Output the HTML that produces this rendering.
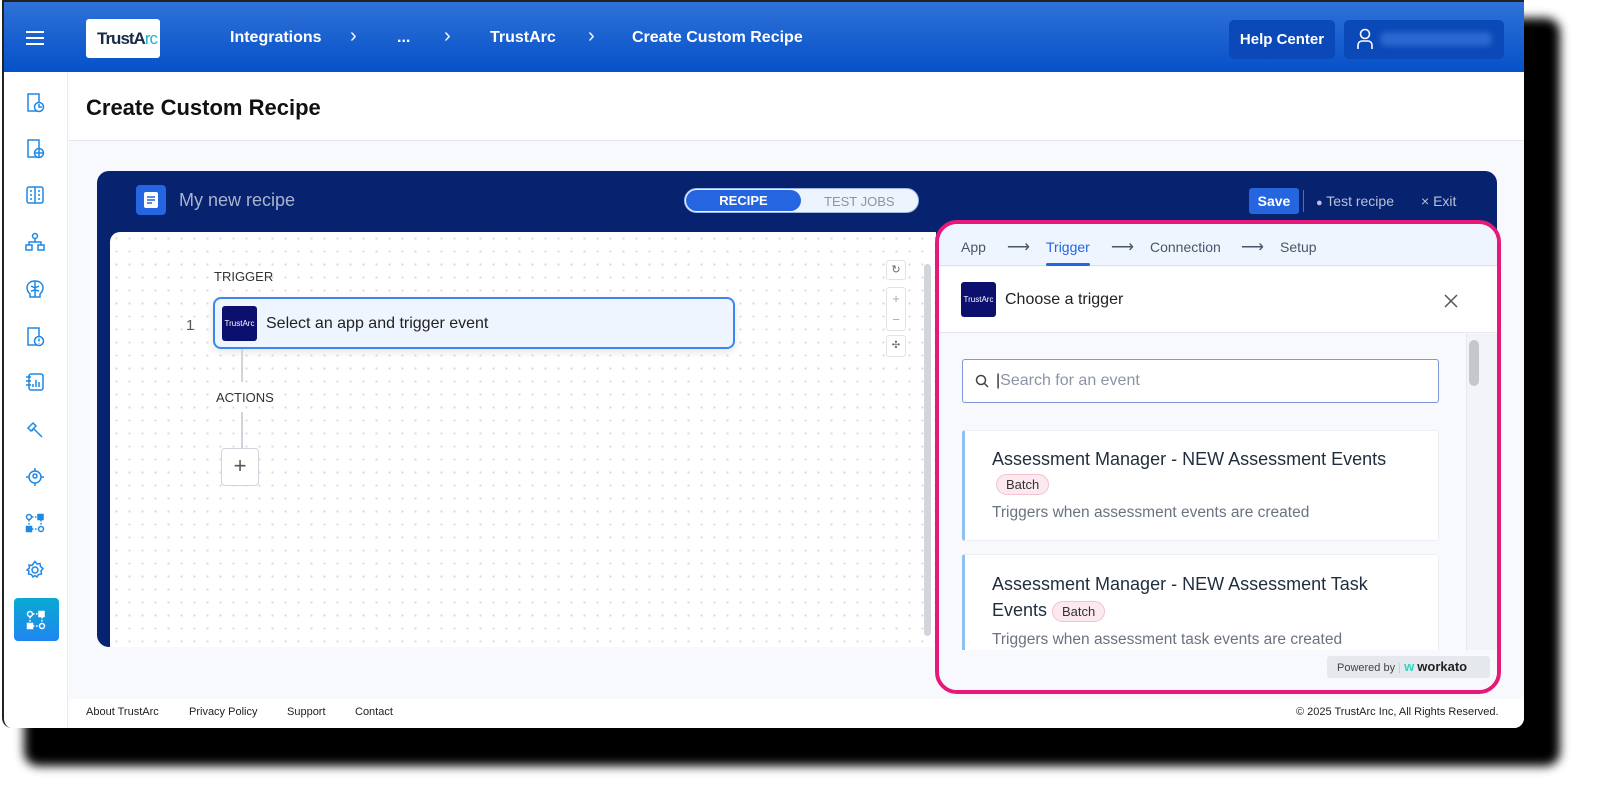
<!DOCTYPE html>
<html><head><meta charset="utf-8"><style>
*{box-sizing:border-box;margin:0;padding:0}
body{width:1600px;height:788px;position:relative;overflow:hidden;background:#fff;font-family:"Liberation Sans",sans-serif;}
.a{position:absolute}
.shadow{position:absolute;left:24px;top:18px;width:1536px;height:748px;background:#000;border-radius:14px;filter:blur(5px)}
.win{position:absolute;left:2px;top:0;width:1522px;height:728px;background:#f7f9fc;border-radius:0 0 10px 10px;overflow:hidden;border-left:2px solid #222;border-top:2px solid #222}
.hdr{left:0;top:0;width:1522px;height:70px;background:linear-gradient(#2f72d8,#0651c9)}
.hdr .t{color:#fff;font-size:16px;font-weight:bold;top:27px}
.hdr .c{color:#fff;font-size:20px;top:23px}
.side{left:0;top:70px;width:64px;height:658px;background:#fff;border-right:1px solid #e8ecf3}
.side svg{position:absolute;left:21px}
.dots{background-color:#fff;background-image:radial-gradient(#d6dae2 1px,transparent 1.2px);background-size:13px 13px}
.gr{color:#4a5568}
</style></head><body>
<div class="shadow"></div>
<div class="win">
 <div class="a hdr">
  <div class="a" style="left:22px;top:29px;width:18px;height:2px;background:#fff;box-shadow:0 6px 0 #fff,0 12px 0 #fff"></div>
  <div class="a" style="left:82px;top:17px;width:74px;height:39px;background:#fff;border-radius:3px;font-size:17px;font-weight:bold;color:#1a2b4a;padding:10px 0 0 11px;letter-spacing:-1px;white-space:nowrap">TrustA<span style="color:#1ab3c8;font-weight:normal">rc</span></div>
  <div class="a t" style="left:226px">Integrations</div>
  <div class="a c" style="left:346px">›</div>
  <div class="a t" style="left:393px">...</div>
  <div class="a c" style="left:440px">›</div>
  <div class="a t" style="left:486px">TrustArc</div>
  <div class="a c" style="left:584px">›</div>
  <div class="a t" style="left:628px">Create Custom Recipe</div>
  <div class="a" style="left:1225px;top:18px;width:106px;height:39px;background:#0b48b8;border-radius:5px;color:#fff;font-weight:bold;font-size:15px;text-align:center;line-height:39px">Help Center</div>
  <div class="a" style="left:1340px;top:18px;width:160px;height:39px;background:#0b48b8;border-radius:5px">
   <svg class="a" style="left:11px;top:8px" width="20" height="22" viewBox="0 0 20 22" fill="none" stroke="#fff" stroke-width="1.6"><circle cx="10" cy="6" r="4.5"/><path d="M3 21v-4a4 4 0 0 1 4-4h6a4 4 0 0 1 4 4v4"/></svg>
   <div class="a" style="left:36px;top:12px;width:112px;height:14px;background:#2c68d0;border-radius:6px;filter:blur(3px)"></div>
  </div>
 </div>
 <div class="a side">
  <svg style="top:20px" width="20" height="22" viewBox="0 0 20 22" fill="none" stroke="#1e88e5" stroke-width="1.5"><path d="M12 19H3V2h11v8"/><circle cx="14" cy="15" r="4.5"/><path d="M14 12v3h3"/></svg>
  <svg style="top:66px" width="20" height="22" viewBox="0 0 20 22" fill="none" stroke="#1e88e5" stroke-width="1.5"><path d="M12 19H3V2h11v8"/><circle cx="14" cy="15" r="4.5"/><path d="M9.5 15h9M14 10.5v9"/></svg>
  <svg style="top:113px" width="20" height="20" viewBox="0 0 20 20" fill="none" stroke="#1e88e5" stroke-width="1.5"><rect x="2" y="2" width="16" height="16" rx="2"/><path d="M10 2v16M5 6h2M5 10h2M5 14h2M13 6h2M13 10h2M13 14h2"/></svg>
  <svg style="top:160px" width="20" height="20" viewBox="0 0 20 20" fill="none" stroke="#1e88e5" stroke-width="1.5"><circle cx="10" cy="4" r="2.5"/><rect x="1" y="13" width="6" height="5"/><rect x="13" y="13" width="6" height="5"/><path d="M10 6.5v3M4 13v-3h12v3"/></svg>
  <svg style="top:207px" width="20" height="20" viewBox="0 0 20 20" fill="none" stroke="#1e88e5" stroke-width="1.5"><path d="M10 2C5 2 2 5 2 9c0 3 2 5 3 6v3h10v-3c1-1 3-3 3-6 0-4-3-7-8-7zM10 2v16M6 7l4 2M14 7l-4 2M6 12l4-1M14 12l-4-1"/></svg>
  <svg style="top:254px" width="20" height="22" viewBox="0 0 20 22" fill="none" stroke="#1e88e5" stroke-width="1.5"><path d="M12 19H3V2h11v8"/><circle cx="14" cy="15" r="4.5"/><path d="M14 12.5v3M14 17v.5"/></svg>
  <svg style="top:300px" width="20" height="20" viewBox="0 0 20 20" fill="none" stroke="#1e88e5" stroke-width="1.5"><rect x="4" y="2" width="14" height="16" rx="2"/><path d="M1 5h5M1 9h5M1 13h5M8 15v-3M11 15V8M14 15v-5"/></svg>
  <svg style="top:348px" width="20" height="20" viewBox="0 0 20 20" fill="none" stroke="#1e88e5" stroke-width="1.5"><path d="M3 8l5-5 3 3-5 5zM9 9l8 8M7 10l1 1"/></svg>
  <svg style="top:395px" width="20" height="20" viewBox="0 0 20 20" fill="none" stroke="#1e88e5" stroke-width="1.5"><circle cx="10" cy="10" r="6"/><path d="M10 1v3M10 16v3M1 10h3M16 10h3"/><circle cx="10" cy="9" r="2"/></svg>
  <svg style="top:441px" width="20" height="20" viewBox="0 0 20 20" fill="none" stroke="#1e88e5" stroke-width="1.5"><circle cx="4" cy="4" r="2.5"/><rect x="13" y="1.5" width="5" height="5" fill="#1e88e5"/><rect x="1.5" y="13.5" width="5" height="5" fill="#1e88e5"/><circle cx="16" cy="16" r="2.5"/><path d="M7 4h5M4 7v5M16 7v5M7 16h5" stroke-dasharray="1.5 1.5"/></svg>
  <svg style="top:488px" width="20" height="20" viewBox="0 0 20 20" fill="none" stroke="#1e88e5" stroke-width="1.5"><circle cx="10" cy="10" r="3"/><path d="M10 1.5l2 2.5 3-.5.5 3 2.5 2-2 2.5.5 3-3 .5-1.5 2.5-2-1.5-2 1.5-1.5-2.5-3-.5.5-3L2 10l2.5-2-.5-3 3 .5z"/></svg>
  <div class="a" style="left:10px;top:526px;width:45px;height:43px;border-radius:4px;background:linear-gradient(#0aa9d2,#1f86f0)">
   <svg class="a" style="left:12px;top:12px" width="20" height="20" viewBox="0 0 20 20" fill="none" stroke="#fff" stroke-width="1.5"><circle cx="4" cy="4" r="2.5"/><rect x="13" y="1.5" width="5" height="5" fill="#fff"/><rect x="1.5" y="13.5" width="5" height="5" fill="#fff"/><circle cx="16" cy="16" r="2.5"/><path d="M7 4h5M4 7v5M16 7v5M7 16h5" stroke-dasharray="1.5 1.5"/></svg>
  </div>
 </div>
 <div class="a" style="left:65px;top:70px;width:1457px;height:69px;background:#fff;border-bottom:1px solid #e6e9ef"></div>
 <div class="a" style="left:82px;top:93px;font-size:22px;font-weight:bold;color:#111">Create Custom Recipe</div>
 <div class="a" style="left:93px;top:169px;width:1400px;height:476px;background:#07226f;border-radius:12px"></div>
 <div class="a" style="left:132px;top:183px;width:30px;height:30px;background:#2566e0;border-radius:4px">
  <svg class="a" style="left:7px;top:6px" width="16" height="18" viewBox="0 0 16 18"><rect x="1" y="1" width="14" height="16" rx="2" fill="#fff"/><path d="M4 6h8M4 9h8M4 12h5" stroke="#2566e0" stroke-width="1.5"/></svg>
 </div>
 <div class="a" style="left:175px;top:188px;font-size:18px;color:#aab4cc">My new recipe</div>
 <div class="a" style="left:680px;top:186px;width:235px;height:25px;background:#eef4fd;border-radius:13px;border:1px solid #9cb6e5"></div>
 <div class="a" style="left:682px;top:188px;width:115px;height:21px;background:#2566e0;border-radius:11px;color:#fff;font-size:13px;font-weight:bold;text-align:center;line-height:21px">RECIPE</div>
 <div class="a" style="left:820px;top:192px;font-size:13px;color:#8a94a6">TEST JOBS</div>
 <div class="a" style="left:1245px;top:186px;width:50px;height:26px;background:#2566e0;border-radius:3px;color:#fff;font-size:14px;font-weight:bold;text-align:center;line-height:26px">Save</div>
 <div class="a" style="left:1299px;top:188px;width:1px;height:22px;background:#5a6ea0"></div>
 <div class="a" style="left:1312px;top:191px;font-size:14px;color:#b7c1d8"><span style="font-size:11px">●</span> Test recipe</div>
 <div class="a" style="left:1417px;top:191px;font-size:14px;color:#b7c1d8">× Exit</div>
 <div class="a dots" style="left:106px;top:230px;width:826px;height:415px;border-radius:10px 0 0 0"></div>
 <div class="a" style="left:210px;top:267px;font-size:13px;color:#333">TRIGGER</div>
 <div class="a" style="left:182px;top:315px;font-size:15px;color:#555">1</div>
 <div class="a" style="left:209px;top:295px;width:522px;height:52px;background:#eef5fe;border:2px solid #3b86f0;border-radius:8px;box-shadow:0 3px 8px rgba(0,0,0,.1)"></div>
 <div class="a" style="left:218px;top:304px;width:35px;height:35px;background:#0b0f6e;border-radius:3px;color:#fff;font-size:8px;line-height:35px;text-align:center">TrustArc</div>
 <div class="a" style="left:262px;top:313px;font-size:16px;color:#222">Select an app and trigger event</div>
 <div class="a" style="left:237px;top:347px;width:2px;height:33px;background:#d0d4db"></div>
 <div class="a" style="left:212px;top:388px;font-size:13px;color:#333">ACTIONS</div>
 <div class="a" style="left:237px;top:410px;width:2px;height:36px;background:#d0d4db"></div>
 <div class="a" style="left:217px;top:446px;width:38px;height:38px;background:#fff;border:1px solid #d0d4db;border-radius:4px;text-align:center;line-height:34px;font-size:22px;color:#555">+</div>
 <div class="a" style="left:882px;top:258px;width:20px;height:20px;background:#fff;border:1px solid #e0e3e8;border-radius:3px;font-size:11px;text-align:center;line-height:18px;color:#666">↻</div>
 <div class="a" style="left:882px;top:285px;width:20px;height:44px;background:#fff;border:1px solid #e0e3e8;border-radius:3px;font-size:13px;text-align:center;line-height:21px;color:#aaa">+<br>−</div>
 <div class="a" style="left:882px;top:333px;width:20px;height:22px;background:#fff;border:1px solid #e0e3e8;border-radius:3px;font-size:10px;text-align:center;line-height:20px;color:#666">✣</div>
 <div class="a" style="left:920px;top:262px;width:7px;height:372px;background:#d2d5da;border-radius:4px"></div>
 <div class="a" style="left:931px;top:218px;width:566px;height:474px;border:4px solid #e6197a;border-radius:22px;background:#f7f9fc;overflow:hidden">
  <div class="a" style="left:0;top:0;width:558px;height:42px;background:#eef5fe;border-bottom:1px solid #d4e2f6"></div>
  <div class="a gr" style="left:22px;top:15px;font-size:14px">App</div>
  <div class="a gr" style="left:68px;top:13px;font-size:16px">⟶</div>
  <div class="a" style="left:107px;top:15px;font-size:14px;color:#2566e0">Trigger</div>
  <div class="a" style="left:107px;top:39px;width:44px;height:3px;background:#2566e0;border-radius:2px"></div>
  <div class="a gr" style="left:172px;top:13px;font-size:16px">⟶</div>
  <div class="a gr" style="left:211px;top:15px;font-size:14px">Connection</div>
  <div class="a gr" style="left:302px;top:13px;font-size:16px">⟶</div>
  <div class="a gr" style="left:341px;top:15px;font-size:14px">Setup</div>
  <div class="a" style="left:0;top:43px;width:558px;height:66px;background:#fff;border-bottom:1px solid #e6e9ef"></div>
  <div class="a" style="left:22px;top:58px;width:35px;height:35px;background:#0b0f6e;border-radius:3px;color:#fff;font-size:8px;line-height:35px;text-align:center">TrustArc</div>
  <div class="a" style="left:66px;top:67px;font-size:16px;color:#222">Choose a trigger</div>
  <svg class="a" style="left:505px;top:70px" width="14" height="14" viewBox="0 0 14 14" stroke="#555" stroke-width="1.5"><path d="M1 1l12 12M13 1L1 13"/></svg>
  <div class="a" style="left:527px;top:110px;width:31px;height:326px;background:#f2f4f7;border-left:1px solid #e6e9ef"></div>
  <div class="a" style="left:530px;top:116px;width:10px;height:46px;background:#c4c7cc;border-radius:5px"></div>
  <div class="a" style="left:23px;top:135px;width:477px;height:44px;background:#fff;border:1px solid #7f96d8;border-radius:3px"></div>
  <svg class="a" style="left:36px;top:150px" width="14" height="14" viewBox="0 0 14 14" fill="none" stroke="#444" stroke-width="1.5"><circle cx="6" cy="6" r="4.5"/><path d="M9.5 9.5L13 13"/></svg>
  <div class="a" style="left:57px;top:148px;font-size:16px;color:#8a94a6"><span style="color:#222">|</span>Search for an event</div>
  <div class="a" style="left:23px;top:206px;width:477px;height:111px;background:#fff;border:1px solid #eceff3;border-left:3px solid #8ec0f2;border-radius:3px"></div>
  <div class="a" style="left:53px;top:225px;font-size:18px;color:#1f2d3d">Assessment Manager - NEW Assessment Events</div>
  <div class="a" style="left:57px;top:250px;height:21px;padding:0 9px;background:#fbe9ef;border:1px solid #f2c3d2;border-radius:11px;font-size:13px;line-height:19px;color:#333">Batch</div>
  <div class="a" style="left:53px;top:280px;font-size:15.5px;color:#6b7280">Triggers when assessment events are created</div>
  <div class="a" style="left:23px;top:330px;width:477px;height:110px;background:#fff;border:1px solid #eceff3;border-left:3px solid #8ec0f2;border-radius:3px"></div>
  <div class="a" style="left:53px;top:350px;font-size:18px;color:#1f2d3d">Assessment Manager - NEW Assessment Task</div>
  <div class="a" style="left:53px;top:376px;font-size:18px;color:#1f2d3d">Events</div>
  <div class="a" style="left:113px;top:377px;height:21px;padding:0 9px;background:#fbe9ef;border:1px solid #f2c3d2;border-radius:11px;font-size:13px;line-height:19px;color:#333">Batch</div>
  <div class="a" style="left:53px;top:407px;font-size:15.5px;color:#6b7280">Triggers when assessment task events are created</div>
  <div class="a" style="left:0;top:426px;width:558px;height:44px;background:#f7f9fc"></div>
  <div class="a" style="left:388px;top:432px;width:163px;height:22px;background:#e5e8ec;border-radius:3px;font-size:11px;color:#444;line-height:22px;padding-left:10px">Powered by <span style="color:#ccc">|</span> <span style="color:#2fd3c0;font-weight:bold;font-size:13px">w</span> <span style="font-weight:bold;font-size:13px;color:#222">workato</span></div>
 </div>
 <div class="a" style="left:65px;top:697px;width:1457px;height:31px;background:#fff"></div>
 <div class="a" style="left:82px;top:704px;font-size:11px;color:#222">About TrustArc</div>
 <div class="a" style="left:185px;top:704px;font-size:11px;color:#222">Privacy Policy</div>
 <div class="a" style="left:283px;top:704px;font-size:11px;color:#222">Support</div>
 <div class="a" style="left:351px;top:704px;font-size:11px;color:#222">Contact</div>
 <div class="a" style="left:1292px;top:704px;font-size:11px;color:#222">© 2025 TrustArc Inc, All Rights Reserved.</div>
</div>
</body></html>
